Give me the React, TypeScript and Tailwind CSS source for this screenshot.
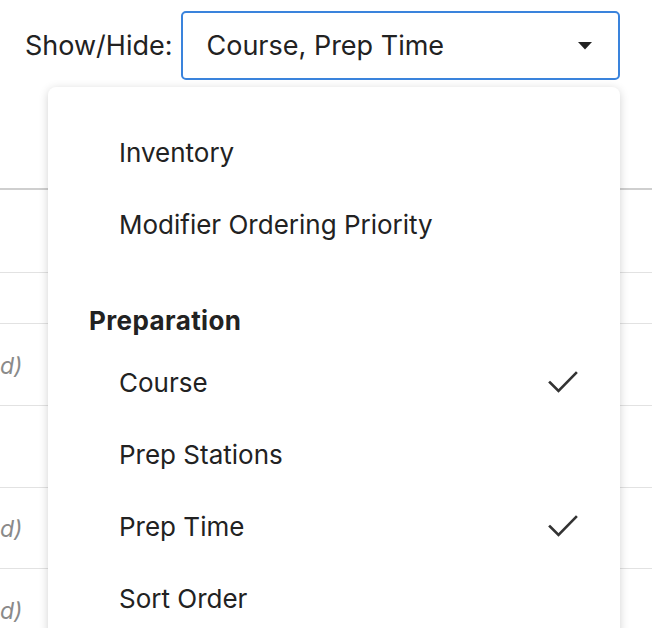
const font = { fontFamily: 'Inter, "Noto Sans", sans-serif' }

type Item = { label: string; checked?: boolean }

const general: Item[] = [
  { label: 'Inventory' },
  { label: 'Modifier Ordering Priority' },
]

const preparation: Item[] = [
  { label: 'Course', checked: true },
  { label: 'Prep Stations' },
  { label: 'Prep Time', checked: true },
  { label: 'Sort Order' },
]

function CheckMark() {
  return (
    <svg width="30" height="24" viewBox="0 0 30 24" fill="none">
      <path d="M2 12.5 L10.5 21 L28 3" stroke="#333" strokeWidth="2.6" strokeLinecap="square" />
    </svg>
  )
}

function MenuItem({ item }: { item: Item }) {
  return (
    <div className="flex h-[72px] items-center justify-between pl-[71px] pr-[42px] text-[26px] text-[#222]">
      <span>{item.label}</span>
      {item.checked && <CheckMark />}
    </div>
  )
}

export default function App() {
  // rows of the table that sits behind the open menu
  const rows = [
    { h: 'h-[83px]', tail: false },
    { h: 'h-[51px]', tail: false },
    { h: 'h-[82px]', tail: true },
    { h: 'h-[82px]', tail: false },
    { h: 'h-[81px]', tail: true },
    { h: 'h-[82px]', tail: true },
  ]

  return (
    <div className="relative h-[628px] w-[652px] overflow-hidden bg-white" style={font}>
      <div className="flex items-center pt-[11px]">
        <span className="ml-[25px] mr-[9px] pt-[2px] text-[27px] text-[#222]">Show/Hide:</span>
        <div className="flex h-[69px] w-[439px] items-center justify-between rounded-[5px] border-2 border-[#3a83dc] pl-[23px] pr-[26px]">
          <span className="pt-[2px] text-[27px] text-[#222]">Course, Prep Time</span>
          <svg width="14" height="8" viewBox="0 0 14 8">
            <path d="M0 0 H14 L7 7.5 Z" fill="#222" />
          </svg>
        </div>
      </div>

      <div className="mt-[108px] border-t-2 border-[#cfcfcf]">
        {rows.map((r, i) => (
          <div key={i} className={`${r.h} flex items-center border-b border-[#e2e2e2]`}>
            {r.tail && <span className="pt-[3px] text-[23px] italic text-[#8a8a8a]">d)</span>}
          </div>
        ))}
      </div>

      <div className="absolute left-[48px] top-[87px] h-[600px] w-[572px] rounded-[8px] bg-white pt-[29px] shadow-[0_2px_10px_rgba(0,0,0,0.18)]">
        {general.map((it) => (
          <MenuItem key={it.label} item={it} />
        ))}
        <div className="mt-[34px] flex h-[52px] items-center pl-[41px] text-[26px] font-bold tracking-[0.4px] text-[#222]">
          Preparation
        </div>
        {preparation.map((it) => (
          <MenuItem key={it.label} item={it} />
        ))}
      </div>
    </div>
  )
}
